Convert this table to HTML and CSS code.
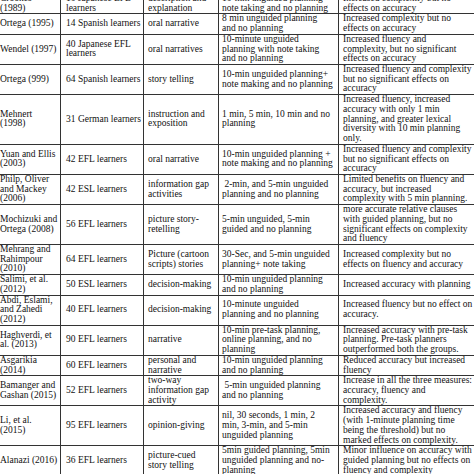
FILE: index.html
```html
<!DOCTYPE html>
<html lang="en">
<head>
<meta charset="utf-8">
<title>Planning studies table</title>
<link rel="stylesheet" href="styles.css">
</head>
<body>
<div class="table">
  <div class="c s">Crookes<br>(1989)</div>
  <div class="c p">10 Japanese EFL<br>learners</div>
  <div class="c t">description and<br>explanation</div>
  <div class="c pl">10-min unguided planning +<br>note taking and no planning</div>
  <div class="c r">Increased complexity but no<br>effects on accuracy</div>

  <div class="c s">Ortega (1995)</div>
  <div class="c p">14 Spanish learners</div>
  <div class="c t">oral narrative</div>
  <div class="c pl">8 min unguided planning<br>and no planning</div>
  <div class="c r">Increased complexity but no<br>effects on accuracy</div>

  <div class="c s">Wendel (1997)</div>
  <div class="c p">40 Japanese EFL<br>learners</div>
  <div class="c t">oral narratives</div>
  <div class="c pl">10-minute unguided<br>planning with note taking<br>and no planning</div>
  <div class="c r">Increased fluency and<br>complexity, but no significant<br>effects on accuracy</div>

  <div class="c s">Ortega (999)</div>
  <div class="c p">64 Spanish learners</div>
  <div class="c t">story telling</div>
  <div class="c pl">10-min unguided planning+<br>note making and no planning</div>
  <div class="c r">Increased fluency and complexity<br>but no significant effects on<br>accuracy</div>

  <div class="c s">Mehnert<br>(1998)</div>
  <div class="c p">31 German learners</div>
  <div class="c t">instruction and<br>exposition</div>
  <div class="c pl">1 min, 5 min, 10 min and no<br>planning</div>
  <div class="c r">Increased fluency, increased<br>accuracy with only 1 min<br>planning, and greater lexical<br>diversity with 10 min planning<br>only.</div>

  <div class="c s">Yuan and Ellis<br>(2003)</div>
  <div class="c p">42 EFL learners</div>
  <div class="c t">oral narrative</div>
  <div class="c pl">10-min unguided planning +<br>note making and no planning</div>
  <div class="c r">Increased fluency and complexity<br>but no significant effects on<br>accuracy</div>

  <div class="c s">Philp, Oliver<br>and Mackey<br>(2006)</div>
  <div class="c p">42 ESL learners</div>
  <div class="c t">information gap<br>activities</div>
  <div class="c pl">&nbsp;2-min, and 5-min unguided<br>planning and no planning</div>
  <div class="c r">Limited benefits on fluency and<br>accuracy, but increased<br>complexity with 5 min planning.</div>

  <div class="c s">Mochizuki and<br>Ortega (2008)</div>
  <div class="c p">56 EFL learners</div>
  <div class="c t">picture story-<br>retelling</div>
  <div class="c pl">5-min unguided, 5-min<br>guided and no planning</div>
  <div class="c r">more accurate relative clauses<br>with guided planning, but no<br>significant effects on complexity<br>and fluency</div>

  <div class="c s">Mehrang and<br>Rahimpour<br>(2010)</div>
  <div class="c p">64 EFL learners</div>
  <div class="c t">Picture (cartoon<br>scripts) stories</div>
  <div class="c pl">30-Sec, and 5-min unguided<br>planning+ note taking</div>
  <div class="c r">Increased complexity but no<br>effects on fluency and accuracy</div>

  <div class="c s">Salimi, et al.<br>(2012)</div>
  <div class="c p">50 ESL learners</div>
  <div class="c t">decision-making</div>
  <div class="c pl">10-min unguided planning<br>and no planning</div>
  <div class="c r">Increased accuracy with planning</div>

  <div class="c s">Abdi, Eslami,<br>and Zahedi<br>(2012)</div>
  <div class="c p">40 EFL learners</div>
  <div class="c t">decision-making</div>
  <div class="c pl">10-minute unguided<br>planning and no planning</div>
  <div class="c r">Increased fluency but no effect on<br>accuracy.</div>

  <div class="c s">Haghverdi, et<br>al. (2013)</div>
  <div class="c p">90 EFL learners</div>
  <div class="c t">narrative</div>
  <div class="c pl">10-min pre-task planning,<br>online planning, and no<br>planning</div>
  <div class="c r">Increased accuracy with pre-task<br>planning. Pre-task planners<br>outperformed both the groups.</div>

  <div class="c s">Asgarikia<br>(2014)</div>
  <div class="c p">60 EFL learners</div>
  <div class="c t">personal and<br>narrative</div>
  <div class="c pl">10-min unguided planning<br>and no planning</div>
  <div class="c r">Reduced accuracy but increased<br>fluency</div>

  <div class="c s">Bamanger and<br>Gashan (2015)</div>
  <div class="c p">52 EFL learners</div>
  <div class="c t">two-way<br>information gap<br>activity</div>
  <div class="c pl">&nbsp;5-min unguided planning<br>and no planning</div>
  <div class="c r">Increase in all the three measures:<br>accuracy, fluency and<br>complexity.</div>

  <div class="c s">Li, et al.<br>(2015)</div>
  <div class="c p">95 EFL learners</div>
  <div class="c t">opinion-giving</div>
  <div class="c pl">nil, 30 seconds, 1 min, 2<br>min, 3-min, and 5-min<br>unguided planning</div>
  <div class="c r">Increased accuracy and fluency<br>(with 1-minute planning time<br>being the threshold) but no<br>marked effects on complexity.</div>

  <div class="c s">Alanazi (2016)</div>
  <div class="c p">36 EFL learners</div>
  <div class="c t">picture-cued<br>story telling</div>
  <div class="c pl">5min guided planning, 5min<br>unguided planning and no-<br>planning</div>
  <div class="c r">Minor influence on accuracy with<br>guided planning but no effects on<br>fluency and complexity</div>
</div>
</body>
</html>
```

FILE: styles.css
```css
html, body {
  margin: 0;
  padding: 0;
  background: #ffffff;
  overflow: hidden;
}

.table {
  display: grid;
  grid-template-columns: 64px 83px 75px 120px 136px;
  margin: -6px 0 0 -3px;
  font-family: "Liberation Serif", "Times New Roman", serif;
  font-size: 9.5px;
  line-height: 9.72px;
  color: #111111;
}

.c {
  display: flex;
  align-items: center;
  box-sizing: border-box;
  border-right: 1px solid #333333;
  border-bottom: 1px solid #333333;
  white-space: nowrap;
  overflow: hidden;
}

.s { padding-left: 3px; }
.p { padding-left: 5px; }
.t { padding-left: 4px; }
.pl { padding-left: 3px; }
.r { padding-left: 4px; }
```
